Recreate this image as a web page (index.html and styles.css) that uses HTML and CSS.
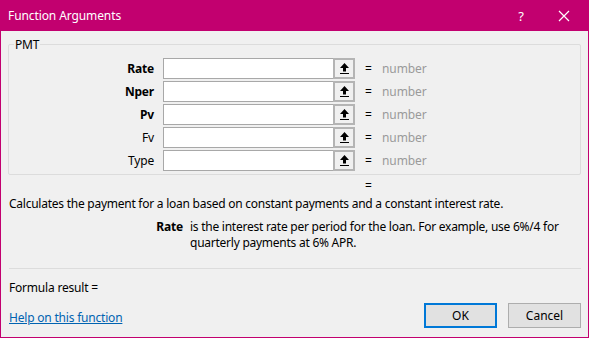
FILE: index.html
```html
<!DOCTYPE html>
<html lang="en">
<head>
    <meta charset="UTF-8">
    <title>Function Arguments</title>
    <link rel="stylesheet" href="styles.css">
</head>
<body>
    <div class="dialog">
        <!-- Title bar -->
        <div class="titlebar">
            <span class="title">Function Arguments</span>
            <span class="help">?</span>
            <span class="close">
                <svg width="12" height="12" viewBox="0 0 12 12"><path d="M1 1 L11 11 M11 1 L1 11" stroke="#fff" stroke-width="1.2"/></svg>
            </span>
        </div>

        <div class="content">
            <!-- Arguments group -->
            <fieldset class="group">
                <legend>PMT</legend>
                <div class="row">
                    <label class="bold">Rate</label>
                    <div class="field"><span class="box"></span><span class="ref"><svg width="9" height="11" viewBox="0 0 9 11"><path d="M4.5 0 L9 5 L6 5 L6 8.5 L3 8.5 L3 5 L0 5 Z M0 10 H9 V11 H0 Z" fill="#000"/></svg></span></div>
                    <span class="eq">=</span><span class="val">number</span>
                </div>
                <div class="row">
                    <label class="bold">Nper</label>
                    <div class="field"><span class="box"></span><span class="ref"><svg width="9" height="11" viewBox="0 0 9 11"><path d="M4.5 0 L9 5 L6 5 L6 8.5 L3 8.5 L3 5 L0 5 Z M0 10 H9 V11 H0 Z" fill="#000"/></svg></span></div>
                    <span class="eq">=</span><span class="val">number</span>
                </div>
                <div class="row">
                    <label class="bold">Pv</label>
                    <div class="field"><span class="box"></span><span class="ref"><svg width="9" height="11" viewBox="0 0 9 11"><path d="M4.5 0 L9 5 L6 5 L6 8.5 L3 8.5 L3 5 L0 5 Z M0 10 H9 V11 H0 Z" fill="#000"/></svg></span></div>
                    <span class="eq">=</span><span class="val">number</span>
                </div>
                <div class="row">
                    <label>Fv</label>
                    <div class="field"><span class="box"></span><span class="ref"><svg width="9" height="11" viewBox="0 0 9 11"><path d="M4.5 0 L9 5 L6 5 L6 8.5 L3 8.5 L3 5 L0 5 Z M0 10 H9 V11 H0 Z" fill="#000"/></svg></span></div>
                    <span class="eq">=</span><span class="val">number</span>
                </div>
                <div class="row">
                    <label>Type</label>
                    <div class="field"><span class="box"></span><span class="ref"><svg width="9" height="11" viewBox="0 0 9 11"><path d="M4.5 0 L9 5 L6 5 L6 8.5 L3 8.5 L3 5 L0 5 Z M0 10 H9 V11 H0 Z" fill="#000"/></svg></span></div>
                    <span class="eq">=</span><span class="val">number</span>
                </div>
            </fieldset>

            <div class="result-eq">=</div>
            <p class="desc">Calculates the payment for a loan based on constant payments and a constant interest rate.</p>

            <div class="arg-help">
                <span class="arg-name">Rate</span>
                <span class="arg-text">is the interest rate per period for the loan. For example, use 6%/4 for quarterly payments at 6% APR.</span>
            </div>

            <hr class="sep">

            <div class="formula">Formula result =</div>

            <div class="footer">
                <a href="#" class="help-link">Help on this function</a>
                <div class="buttons">
                    <button class="btn btn-ok">OK</button>
                    <button class="btn">Cancel</button>
                </div>
            </div>
        </div>
    </div>
</body>
</html>
```

FILE: styles.css
```css
/* Reset */
* {
    margin: 0;
    padding: 0;
    box-sizing: border-box;
}

body {
    font-family: 'Noto Sans', 'Open Sans', sans-serif;
    font-size: 12px;
    color: #000;
    background: #f0f0f0;
}

/* Window */
.dialog {
    width: 589px;
    height: 338px;
    border: 1px solid #c2006f;
    border-top: none;
    background: #f0f0f0;
    display: flex;
    flex-direction: column;
}

.titlebar {
    height: 31px;
    background: #c2006f;
    color: #fff;
    display: flex;
    align-items: center;
    padding-left: 8px;
    margin: 0 -1px;
}

.title {
    flex: 1;
    font-size: 12px;
    letter-spacing: -0.1px;
}

.help {
    width: 40px;
    text-align: center;
    font-size: 13px;
}

.close {
    width: 46px;
    display: flex;
    justify-content: center;
    align-items: center;
    margin-right: 2px;
}

.content {
    flex: 1;
    padding: 0 7px;
    display: flex;
    flex-direction: column;
}

/* Argument group */
.group {
    margin-top: 5px;
    border: 1px solid #dcdcdc;
    border-radius: 2px;
    padding: 4px 0 2px 0;
}

.group legend {
    margin-left: 5px;
    padding: 0 1px;
    font-size: 12px;
    letter-spacing: -0.2px;
}

.row {
    display: flex;
    align-items: center;
    height: 23px;
}

.row label {
    width: 154px;
    text-align: right;
    padding-right: 9px;
    color: #000;
    letter-spacing: -0.2px;
}

.row label.bold {
    font-weight: bold;
}

.field {
    display: flex;
    height: 21px;
    width: 192px;
}

.box {
    flex: 1;
    background: #fff;
    border: 1px solid #a8a8a8;
    border-right: none;
}

.ref {
    width: 22px;
    background: #f0f0f0;
    border: 2px solid #b4b4b4;
    display: flex;
    align-items: center;
    justify-content: center;
}

.eq {
    margin-left: 10px;
    width: 17px;
}

.val {
    color: #9a9a9a;
    letter-spacing: -0.1px;
}

/* Description */
.result-eq {
    margin: 4px 0 0 357px;
    line-height: 14px;
}

.desc {
    margin-top: 3px;
    margin-left: 1px;
    line-height: 15px;
    letter-spacing: -0.25px;
}

.arg-help {
    display: flex;
    margin-top: 8px;
    line-height: 16px;
    gap: 7px;
}

.arg-name {
    width: 175px;
    text-align: right;
    font-weight: bold;
    flex-shrink: 0;
    letter-spacing: -0.2px;
}

.arg-text {
    width: 385px;
    letter-spacing: -0.25px;
}

.sep {
    border: none;
    border-top: 1px solid #dcdcdc;
    margin-top: 17px;
    margin-left: 1px;
}

.formula {
    margin-top: 11px;
    margin-left: 1px;
    line-height: 16px;
    letter-spacing: -0.2px;
}

.footer {
    display: flex;
    justify-content: space-between;
    align-items: center;
    margin-top: 7px;
}

.help-link {
    color: #0063b1;
    text-decoration: underline;
    margin-left: 1px;
    margin-top: 3px;
    letter-spacing: -0.2px;
}

.buttons {
    display: flex;
    gap: 11px;
}

.btn {
    width: 73px;
    height: 25px;
    font-family: 'Noto Sans', 'Open Sans', sans-serif;
    font-size: 12px;
    background: #e1e1e1;
    border: 1px solid #adadad;
    color: #000;
}

.btn-ok {
    border: 2px solid #0078d7;
}
```
